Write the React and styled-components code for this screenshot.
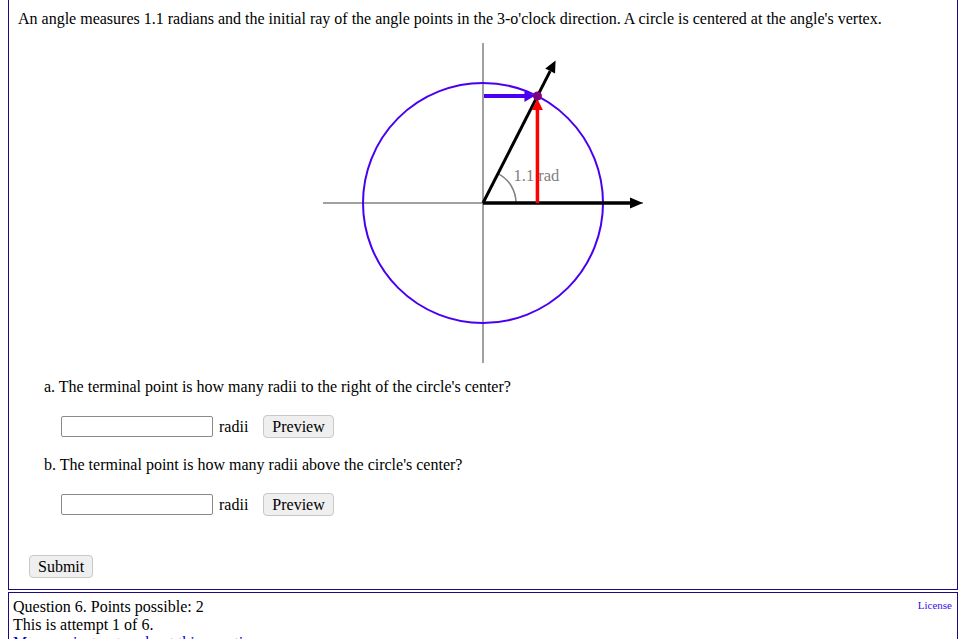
import React from "react";
import styled, { createGlobalStyle } from "styled-components";

const Global = createGlobalStyle`
  html, body { margin: 0; padding: 0; background: #fff; }
  body {
    margin: 0 3px 0 8px;
    font-family: "Liberation Serif", "Times New Roman", serif;
    font-size: 16px;
    line-height: 18px;
    color: #000;
  }
`;

const QuestionPanel = styled.div`
  border: 1px solid #1c0a7e;
  border-top: none;
  padding: 10px 9px 11px 9px;
  margin-bottom: 2px;
`;

const Text = styled.p`
  margin: 0;
`;

const Figure = styled.div`
  display: flex;
  justify-content: center;
  margin: 15px 0;
`;

const Part = styled.div`
  padding-left: 26px;
`;

const AnswerRow = styled.div`
  display: flex;
  align-items: center;
  height: 23px;
  margin: 19px 0 18px 17px;
`;

const AnswerInput = styled.input`
  box-sizing: border-box;
  width: 152px;
  height: 21px;
  border: 1px solid #8a8a8a;
  border-radius: 2px;
  margin: 0 6px 0 0;
  padding: 0 3px;
  font: inherit;
`;

const Unit = styled.span`
  margin-right: 15px;
`;

const Button = styled.button`
  box-sizing: border-box;
  height: 23px;
  padding: 0 8px;
  font-family: "Liberation Serif", "Times New Roman", serif;
  font-size: 16px;
  line-height: 18px;
  color: #000;
  background: #efefef;
  border: 1px solid #c8c8c8;
  border-radius: 4px;
`;

const SubmitWrap = styled.div`
  margin: 39px 0 0 11px;
`;

const InfoPanel = styled.div`
  border: 1px solid #1c0a7e;
  padding: 5px 5px 0 4px;
`;

const License = styled.a`
  float: right;
  font-size: 11px;
  line-height: 14px;
  color: #3a0ee8;
  text-decoration: none;
`;

const InfoLine = styled.div``;

const Link = styled.a`
  color: #0000ee;
  text-decoration: underline;
`;

const CX = 160;
const CY = 160;
const A = 1.1;
const cos = Math.cos(A);
const sin = Math.sin(A);

function Diagram() {
  const px = CX + 120 * cos;
  const py = CY - 120 * sin;
  const tipX = CX + 160 * cos;
  const tipY = CY - 160 * sin;
  const bx = CX + 148 * cos;
  const by = CY - 148 * sin;
  const nx = sin * 5.5;
  const ny = cos * 5.5;
  const arcEndX = CX + 33 * cos;
  const arcEndY = CY - 33 * sin;
  return (
    <svg width="320" height="320" viewBox="0 0 320 320">
      <line x1="0" y1={CY} x2="320" y2={CY} stroke="#808080" strokeWidth="1.5" />
      <line x1={CX} y1="0" x2={CX} y2="320" stroke="#808080" strokeWidth="1.5" />
      <circle cx={CX} cy={CY} r="120" fill="none" stroke="#4a00f0" strokeWidth="2" />
      <path
        d={`M ${CX + 33} ${CY} A 33 33 0 0 0 ${arcEndX} ${arcEndY}`}
        fill="none"
        stroke="#808080"
        strokeWidth="1.5"
      />
      <text
        x="190.5"
        y="138"
        fill="#808080"
        fontFamily="Liberation Serif, Times New Roman, serif"
        fontSize="16.5"
      >
        1.1 rad
      </text>
      <line x1={CX} y1={CY} x2="309" y2={CY} stroke="#000" strokeWidth="3.5" />
      <polygon points={`320,${CY} 307,${CY - 5.5} 307,${CY + 5.5}`} fill="#000" />
      <line x1={CX} y1={CY} x2={bx} y2={by} stroke="#000" strokeWidth="3" />
      <polygon
        points={`${tipX},${tipY} ${bx + nx},${by + ny} ${bx - nx},${by - ny}`}
        fill="#000"
      />
      <line x1={px} y1={CY} x2={px} y2={py + 13} stroke="#ff0000" strokeWidth="3.5" />
      <polygon
        points={`${px},${py + 3} ${px - 5.5},${py + 14} ${px + 5.5},${py + 14}`}
        fill="#ff0000"
      />
      <line x1={CX + 1} y1={py} x2={px - 11} y2={py} stroke="#4a00f0" strokeWidth="4" />
      <polygon
        points={`${px - 3},${py} ${px - 13},${py - 6} ${px - 13},${py + 6}`}
        fill="#4a00f0"
      />
      <circle cx={px} cy={py} r="4.5" fill="#800080" />
    </svg>
  );
}

export default function App() {
  return (
    <>
      <Global />
      <QuestionPanel>
        <Text>
          An angle measures 1.1 radians and the initial ray of the angle points in the
          3-o'clock direction. A circle is centered at the angle's vertex.
        </Text>
        <Figure>
          <Diagram />
        </Figure>
        <Part>
          <Text>a. The terminal point is how many radii to the right of the circle's center?</Text>
          <AnswerRow>
            <AnswerInput type="text" />
            <Unit>radii</Unit>
            <Button type="button">Preview</Button>
          </AnswerRow>
          <Text>b. The terminal point is how many radii above the circle's center?</Text>
          <AnswerRow>
            <AnswerInput type="text" />
            <Unit>radii</Unit>
            <Button type="button">Preview</Button>
          </AnswerRow>
        </Part>
        <SubmitWrap>
          <Button type="button">Submit</Button>
        </SubmitWrap>
      </QuestionPanel>
      <InfoPanel>
        <License href="#">License</License>
        <InfoLine>Question 6. Points possible: 2</InfoLine>
        <InfoLine>This is attempt 1 of 6.</InfoLine>
        <InfoLine>
          <Link href="#">Message instructor about this question</Link>
        </InfoLine>
      </InfoPanel>
    </>
  );
}
